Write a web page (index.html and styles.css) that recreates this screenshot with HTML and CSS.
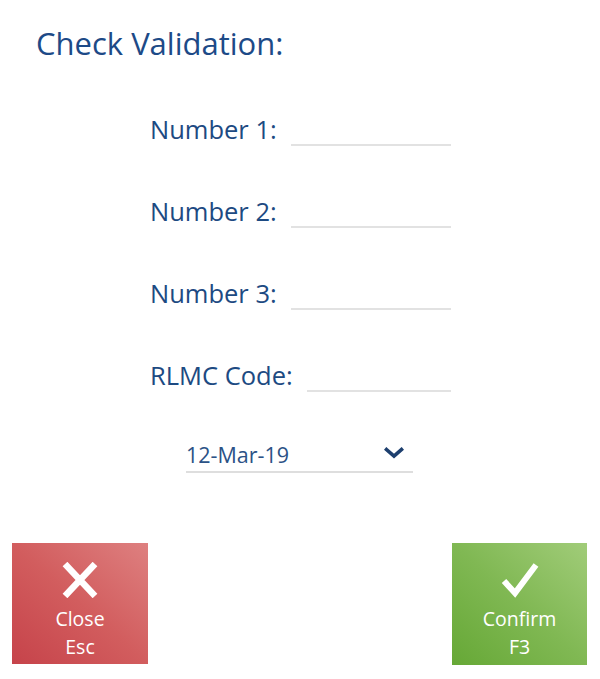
FILE: index.html
```html
<!DOCTYPE html>
<html lang="en">
<head>
<meta charset="utf-8">
<title>Check Validation</title>
<link rel="stylesheet" href="styles.css">
</head>
<body>
<div class="page">
  <h1 class="title">Check Validation:</h1>
  <div class="form">
    <div class="row"><span class="label">Number 1:</span><span class="input"></span></div>
    <div class="row"><span class="label">Number 2:</span><span class="input"></span></div>
    <div class="row"><span class="label">Number 3:</span><span class="input"></span></div>
    <div class="row"><span class="label">RLMC Code:</span><span class="input"></span></div>
  </div>
  <div class="date">
    <span class="date-text">12-Mar-19</span>
    <svg class="chevron" width="20" height="12" viewBox="0 0 20 12"><path d="M2.5 2.5 L10 9 L17.5 2.5" fill="none" stroke="#1d3f6e" stroke-width="3.6" stroke-linecap="square"/></svg>
  </div>
  <div class="actions">
    <div class="btn btn-close">
      <svg class="icon" width="38" height="36" viewBox="0 0 38 36"><path d="M4 2 L34 34 M34 2 L4 34" stroke="#fff" stroke-width="6.5" fill="none"/></svg>
      <span class="btn-text">Close</span>
      <span class="btn-text">Esc</span>
    </div>
    <div class="btn btn-confirm">
      <svg class="icon" width="38" height="36" viewBox="0 0 38 36"><path d="M3 19 L14 31 L35 3" stroke="#fff" stroke-width="6" fill="none"/></svg>
      <span class="btn-text">Confirm</span>
      <span class="btn-text">F3</span>
    </div>
  </div>
</div>
</body>
</html>
```

FILE: styles.css
```css
html, body {
  margin: 0;
  padding: 0;
  background: #ffffff;
}

.page {
  width: 600px;
  height: 679px;
  font-family: "Open Sans", "Noto Sans", sans-serif;
  color: #1f4c85;
}

.title {
  margin: 23px 0 0 36px;
  font-size: 31px;
  font-weight: 400;
  line-height: 40px;
  color: #1d4a87;
}

.form {
  margin: 51px 0 0 150px;
  width: 301px;
  display: flex;
  flex-direction: column;
  gap: 50px;
}

.row {
  display: flex;
  align-items: flex-start;
  gap: 14px;
  height: 32px;
}

.label {
  font-size: 25.5px;
  line-height: 30px;
  white-space: nowrap;
  color: #1d4a82;
}

.input {
  flex: 1;
  height: 32px;
  box-sizing: border-box;
  border-bottom: 2px solid #e2e2e2;
}

.date {
  margin: 50px 0 0 186px;
  width: 227px;
  height: 29px;
  border-bottom: 2px solid #dedede;
  display: flex;
  justify-content: space-between;
  align-items: flex-start;
}

.date-text {
  font-size: 21.5px;
  line-height: 26px;
  color: #2b5286;
}

.chevron {
  margin: 5px 9px 0 0;
}

.actions {
  margin-top: 70px;
  padding: 0 13px 0 12px;
  display: flex;
  justify-content: space-between;
}

.btn {
  width: 136px;
  height: 121px;
  box-sizing: border-box;
  padding-top: 19px;
  display: flex;
  flex-direction: column;
  align-items: center;
  color: #ffffff;
}

.btn-close {
  background: linear-gradient(to top right, #c6434a 0%, #d25d5e 50%, #de8080 100%);
}

.btn-confirm {
  width: 135px;
  height: 122px;
  background: linear-gradient(to top right, #66a836 0%, #80b853 50%, #a1cc79 100%);
}

.icon {
  display: block;
  margin-bottom: 7px;
}

.btn-text {
  font-size: 19.5px;
  line-height: 28px;
}
```
